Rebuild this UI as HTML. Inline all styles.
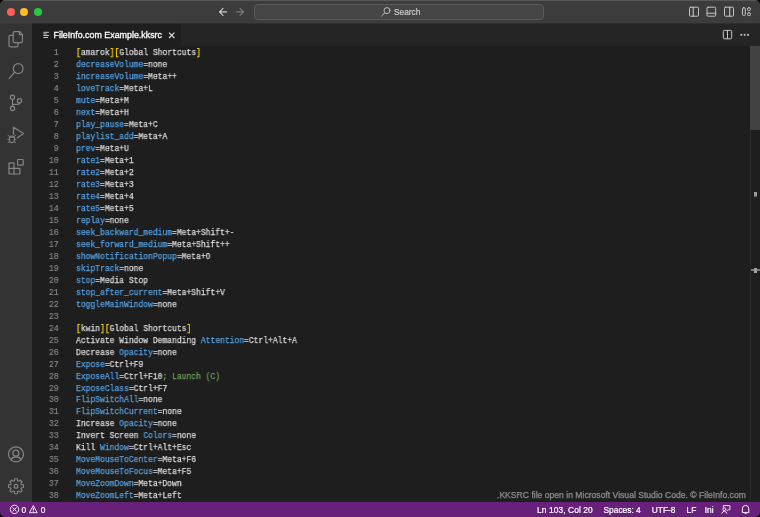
<!DOCTYPE html>
<html><head><meta charset="utf-8">
<style>
*{margin:0;padding:0;box-sizing:border-box}
html,body{width:760px;height:517px;background:#000;overflow:hidden}
#win{position:absolute;left:0;top:0;width:760px;height:517px;border-radius:5px;overflow:hidden;background:#1e1e1e;font-family:"Liberation Sans",sans-serif}
#title{position:absolute;left:0;top:0;width:760px;height:23px;background:#3c3c3c;border-top:1px solid #585858}
.tl{position:absolute;width:8.2px;height:8.2px;border-radius:50%}
#search{position:absolute;left:254px;top:3px;width:290px;height:16px;border:1px solid #5a5a5a;border-radius:4px;background:#454545}
#search span{position:absolute;left:139px;top:1.5px;font-size:8.3px;color:#cccccc;-webkit-text-stroke-width:0.2px}
#act{position:absolute;left:0;top:23px;width:32px;height:479px;background:#333333}
#tabs{position:absolute;left:32px;top:23px;width:728px;height:23px;background:#252526}
#tab{position:absolute;left:0;top:0;width:149px;height:23px;background:#1e1e1e}
#tab .t{position:absolute;left:21.5px;top:6.5px;font-size:8.88px;color:#ffffff;white-space:nowrap;-webkit-text-stroke:0.3px #ffffff}
#ed{position:absolute;left:32px;top:46px;width:728px;height:456px;background:#1e1e1e}
#nums{position:absolute;left:0;top:2px;padding-top:0.4px;width:29.8px;transform:scaleX(0.8889);transform-origin:0 0;font-family:"Liberation Mono",monospace;font-size:9px;line-height:11.965px;color:#858585;text-align:right;-webkit-text-stroke-width:0.2px}
#code{position:absolute;left:43.8px;top:2px;padding-top:0.4px;transform:scaleX(0.8889);transform-origin:0 0;font-family:"Liberation Mono",monospace;font-size:9px;line-height:11.965px;color:#dcdcdc;white-space:pre;-webkit-text-stroke-width:0.25px}
.k{color:#55a0e2}.b{color:#ffd700}.c{color:#6aa358}
#sbar{position:absolute;left:718px;top:0;width:10px;height:84px;background:#424242}
#ruler{position:absolute;left:718px;top:0;width:1px;height:456px;background:#2b2b2b}
#status{position:absolute;left:0;top:502px;width:760px;height:15px;background:#68217a;color:#ffffff;font-size:8.4px}
#status span{position:absolute;top:2.5px;white-space:nowrap;-webkit-text-stroke-width:0.2px}
#wm{position:absolute;left:497.4px;top:489.5px;font-size:8.6px;color:#8e8e8e;white-space:nowrap;-webkit-text-stroke-width:0.25px}
svg{position:absolute;overflow:visible}
#nums,#code,#title,#tabs,#status,#wm{will-change:transform}
</style></head><body>
<div id="win">
<div id="title">
  <div class="tl" style="left:7.1px;top:6.9px;background:#ff5f57"></div>
  <div class="tl" style="left:20.3px;top:6.9px;background:#febc2e"></div>
  <div class="tl" style="left:33.8px;top:6.9px;background:#28c840"></div>
  <div id="search"><span>Search</span></div>
  <!-- back / forward -->
  <svg width="760" height="23" style="left:0;top:-1px" fill="none" stroke-linecap="round" stroke-linejoin="round">
    <path d="M219.8 11.9H226.5M223 8.4L219.5 11.9L223 15.4" stroke="#cccccc" stroke-width="1.2"/>
    <path d="M236.5 11.9H243.5M240 8.4L243.5 11.9L240 15.4" stroke="#7a7a7a" stroke-width="1.2"/>
    <!-- search icon -->
    <circle cx="387" cy="10.6" r="3" stroke="#bbbbbb" stroke-width="1"/>
    <path d="M384.9 12.7L381.6 16" stroke="#bbbbbb" stroke-width="1"/>
    <!-- layout icons -->
    <g stroke="#c5c5c5" stroke-width="1">
      <rect x="689.5" y="7.2" width="9" height="9" rx="1"/>
      <path d="M693.2 7.2V16.2" stroke-width="1.1"/>
      <rect x="707" y="7.2" width="8.7" height="9" rx="1"/>
      <path d="M707 13.3H715.7" stroke-width="1.1"/>
      <rect x="724.5" y="7.2" width="9" height="9" rx="1"/>
      <path d="M729.7 7.2V16.2" stroke-width="1.1"/>
      <rect x="742.5" y="7.7" width="2.8" height="7.8" rx="1.2"/>
      <rect x="747.5" y="7.7" width="3" height="2.9" rx="1.3"/>
      <rect x="747.5" y="12.7" width="3" height="2.9" rx="1.3"/>
    </g>
  </svg>
</div>
<div style="position:absolute;left:0;top:23px;width:760px;height:1px;background:rgba(60,60,60,0.45);z-index:5"></div>
<div id="act">
  <svg width="32" height="479" style="left:0;top:-23px" fill="none" stroke="#858585" stroke-width="1.2" stroke-linejoin="round" stroke-linecap="round">
    <!-- explorer -->
    <path d="M12.9 35.4H10.2Q9 35.4 9 36.6V45.6Q9 46.8 10.2 46.8H16.8Q18 46.8 18 45.6V42.6"/>
    <path d="M14.4 31.6H19.6L22.4 34.4V41.4Q22.4 42.6 21.2 42.6H14.4Q13.2 42.6 13.2 41.4V32.8Q13.2 31.6 14.4 31.6Z"/>
    <path d="M19.4 31.8V34.6H22.2"/>
    <!-- search -->
    <circle cx="18.2" cy="68.6" r="4.9"/>
    <path d="M14.7 72.1L9.3 78.4"/>
    <!-- scm -->
    <circle cx="12.5" cy="97.2" r="2.1"/>
    <circle cx="19.5" cy="100.7" r="2.1"/>
    <circle cx="12.5" cy="108.5" r="2.1"/>
    <path d="M12.5 99.3V106.4M19.5 102.8Q19.5 104.4 17.4 104.4H12.7"/>
    <!-- debug -->
    <path d="M13.5 134.2V127.2L23.6 133.6L17.4 137.8"/>
    <ellipse cx="11.85" cy="139.3" rx="2.6" ry="3.3" stroke-width="1.05"/>
    <path d="M9.4 137.3H14.3M9.5 136.3L8.1 135.5M14.2 136.3L15.6 135.5M9.2 139.4H7.9M14.5 139.4H15.8M9.5 141.7L8.1 142.6M14.2 141.7L15.6 142.6" stroke-width="0.95"/>
    <!-- extensions -->
    <path d="M9 162.9H14V168.4H19.9V174H9Z"/>
    <path d="M9 168.4H14V174"/>
    <rect x="17.6" y="159.5" width="5.6" height="5.7" rx="0.8"/>
    <!-- accounts -->
    <circle cx="16" cy="454.3" r="7.5"/>
    <circle cx="15.9" cy="453.2" r="3"/>
    <path d="M10.6 459.6Q12.4 456.8 16 456.8Q19.6 456.8 21.4 459.6"/>
    <!-- settings -->
    <path d="M14.49 480.81L14.51 480.80L14.71 478.71L17.29 478.71L17.49 480.80L18.75 481.32L18.76 481.33L20.39 479.99L22.21 481.81L20.87 483.44L21.39 484.69L21.40 484.71L23.49 484.91L23.49 487.49L21.40 487.69L20.88 488.95L20.87 488.96L22.21 490.59L20.39 492.41L18.76 491.07L17.51 491.59L17.49 491.60L17.29 493.69L14.71 493.69L14.51 491.60L13.25 491.08L13.24 491.07L11.61 492.41L9.79 490.59L11.13 488.96L10.61 487.71L10.60 487.69L8.51 487.49L8.51 484.91L10.60 484.71L11.12 483.45L11.13 483.44L9.79 481.81L11.61 479.99L13.24 481.33Z" stroke-width="1.1"/>
    <circle cx="16" cy="486.2" r="1.9"/>
  </svg>
</div>
<div id="tabs">
  <div id="tab">
    <svg width="149" height="23" style="left:0;top:0" stroke="#d8d8d8" stroke-width="0.9" fill="none">
      <path d="M11.4 9.3H16.9M11.4 10.9H14.8M11.4 12.5H17.1M11.4 14.5H16"/>
      <path d="M137 9.6L142.4 15M142.4 9.6L137 15" stroke="#e0e0e0" stroke-width="1.1"/>
    </svg>
    <span class="t">FileInfo.com Example.kksrc</span>
  </div>
  <svg width="728" height="23" style="left:0;top:0" fill="none">
    <rect x="691.3" y="7.4" width="8.4" height="8.4" rx="1" stroke="#c5c5c5" stroke-width="1"/>
    <path d="M695.5 7.4V15.8" stroke="#c5c5c5" stroke-width="1"/>
    <rect x="708.5" y="10.9" width="1.8" height="1.8" fill="#c5c5c5"/>
    <rect x="711.8" y="10.9" width="1.8" height="1.8" fill="#c5c5c5"/>
    <rect x="715.1" y="10.9" width="1.8" height="1.8" fill="#c5c5c5"/>
  </svg>
</div>
<div id="ed">
<div id="nums">1<br>2<br>3<br>4<br>5<br>6<br>7<br>8<br>9<br>10<br>11<br>12<br>13<br>14<br>15<br>16<br>17<br>18<br>19<br>20<br>21<br>22<br>23<br>24<br>25<br>26<br>27<br>28<br>29<br>30<br>31<br>32<br>33<br>34<br>35<br>36<br>37<br>38</div>
<div id="code"><span class="b">[</span>amarok<span class="b">]</span><span class="b">[</span>Global Shortcuts<span class="b">]</span>
<span class="k">decreaseVolume</span>=none
<span class="k">increaseVolume</span>=Meta++
<span class="k">loveTrack</span>=Meta+L
<span class="k">mute</span>=Meta+M
<span class="k">next</span>=Meta+H
<span class="k">play_pause</span>=Meta+C
<span class="k">playlist_add</span>=Meta+A
<span class="k">prev</span>=Meta+U
<span class="k">rate1</span>=Meta+1
<span class="k">rate2</span>=Meta+2
<span class="k">rate3</span>=Meta+3
<span class="k">rate4</span>=Meta+4
<span class="k">rate5</span>=Meta+5
<span class="k">replay</span>=none
<span class="k">seek_backward_medium</span>=Meta+Shift+-
<span class="k">seek_forward_medium</span>=Meta+Shift++
<span class="k">showNotificationPopup</span>=Meta+O
<span class="k">skipTrack</span>=none
<span class="k">stop</span>=Media Stop
<span class="k">stop_after_current</span>=Meta+Shift+V
<span class="k">toggleMainWindow</span>=none

<span class="b">[</span>kwin<span class="b">]</span><span class="b">[</span>Global Shortcuts<span class="b">]</span>
Activate Window Demanding <span class="k">Attention</span>=Ctrl+Alt+A
Decrease <span class="k">Opacity</span>=none
<span class="k">Expose</span>=Ctrl+F9
<span class="k">ExposeAll</span>=Ctrl+F10<span class="c">; Launch (C)</span>
<span class="k">ExposeClass</span>=Ctrl+F7
<span class="k">FlipSwitchAll</span>=none
<span class="k">FlipSwitchCurrent</span>=none
Increase <span class="k">Opacity</span>=none
Invert Screen <span class="k">Colors</span>=none
Kill <span class="k">Window</span>=Ctrl+Alt+Esc
<span class="k">MoveMouseToCenter</span>=Meta+F6
<span class="k">MoveMouseToFocus</span>=Meta+F5
<span class="k">MoveZoomDown</span>=Meta+Down
<span class="k">MoveZoomLeft</span>=Meta+Left</div>
<div id="ruler"></div>
<div id="sbar"></div>
<svg width="728" height="456" style="left:0;top:0">
  <rect x="722" y="146" width="3" height="4.6" fill="#9a9a9a"/>
  <rect x="719" y="223" width="9" height="2" fill="#7a7a7a"/>
  <rect x="722" y="222" width="3" height="5" fill="#a0a0a0"/>
</svg>
</div>
<div id="wm">.KKSRC file open in Microsoft Visual Studio Code. © FileInfo.com</div>
<div id="status">
  <svg width="760" height="15" style="left:0;top:0" fill="none" stroke="#ffffff">
    <circle cx="14.5" cy="7.4" r="4.2" stroke-width="0.9"/>
    <path d="M12.5 5.4L16.5 9.4M16.5 5.4L12.5 9.4" stroke-width="0.95"/>
    <path d="M33.3 3.6L37.2 10.7H29.4Z" stroke-width="0.9" stroke-linejoin="round"/>
    <path d="M33.3 5.9V8.5M33.3 9.3V10" stroke-width="1"/>
    <!-- feedback -->
    <path d="M723.3 5.5V3.6H729.9V7.8H728.3L727.4 8.7L727.1 7.8H726.5" stroke-width="0.85" stroke-linejoin="round"/>
    <circle cx="724.2" cy="7.2" r="1.4" stroke-width="0.9"/>
    <path d="M721.7 11.6Q722.3 9.3 724.3 9.3Q726.3 9.3 726.9 11.6" stroke-width="0.9"/>
    <!-- bell -->
    <path d="M742.4 10.6V6.8Q742.4 4.3 744.3 3.7Q745.6 3.3 746.9 3.7Q748.8 4.3 748.8 6.8V10.6Z" stroke-width="0.95" stroke-linejoin="round"/>
    <path d="M744.8 11.5H746.4" stroke-width="1"/>
  </svg>
  <span style="left:21.5px">0</span>
  <span style="left:40.7px">0</span>
  <span style="left:537px;letter-spacing:0.1px">Ln 103, Col 20</span>
  <span style="left:603.5px">Spaces: 4</span>
  <span style="left:651.8px">UTF-8</span>
  <span style="left:686.6px">LF</span>
  <span style="left:704.8px">Ini</span>
</div>
</div>
</body></html>
